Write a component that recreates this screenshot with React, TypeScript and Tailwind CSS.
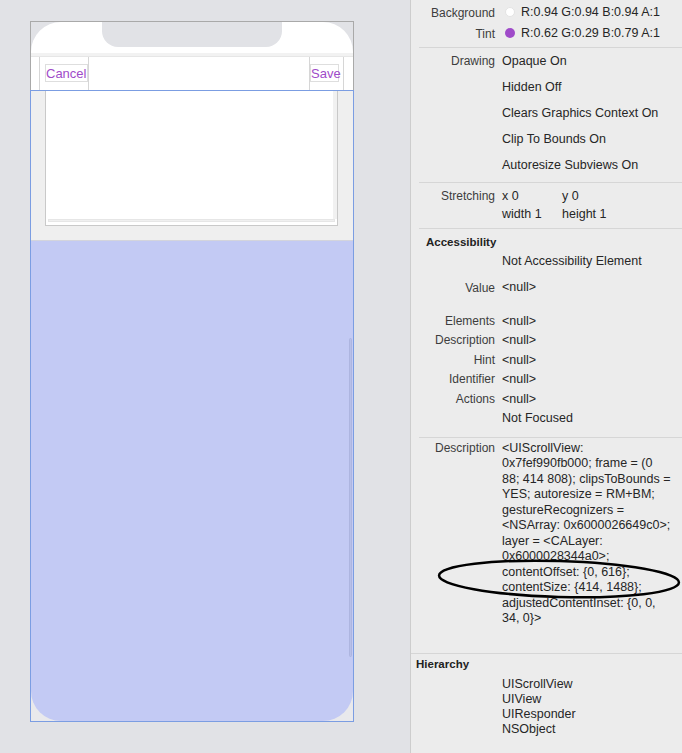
import React from "react";

type RowProps = {
  label?: string;
  children: React.ReactNode;
  className?: string;
};

const Row: React.FC<RowProps> = ({ label, children, className }) => {
  return (
    <div className={"flex items-center " + (className ?? "")}>
      <div className="w-[84px] shrink-0 text-right text-[12px] text-[#3d3d3d]">{label}</div>
      <div className="ml-[7px] text-[#262626] whitespace-nowrap">{children}</div>
    </div>
  );
};

const Divider = () => <div className="ml-[8px] h-px bg-[#d6d6d6]" />;

export default function App() {
  const description = [
    "<UIScrollView:",
    "0x7fef990fb000; frame = (0",
    "88; 414 808); clipsToBounds =",
    "YES; autoresize = RM+BM;",
    "gestureRecognizers =",
    "<NSArray: 0x6000026649c0>;",
    "layer = <CALayer:",
    "0x6000028344a0>;",
    "contentOffset: {0, 616};",
    "contentSize: {414, 1488};",
    "adjustedContentInset: {0, 0,",
    "34, 0}>",
  ];
  const hierarchy = ["UIScrollView", "UIView", "UIResponder", "NSObject"];

  return (
    <div className="flex w-[682px] h-[753px] overflow-hidden font-['Liberation_Sans',Arial,sans-serif]">
      {/* canvas */}
      <div className="w-[410px] shrink-0 bg-[#e1e2e6] pl-[30px] pt-[21px]">
        <div className="w-[324px]">
          <div className="h-[69px] border-x border-t border-[#a9a9a9] flex flex-col">
            <div className="h-[31px] bg-white rounded-t-[30px] flex justify-center">
              <div className="w-[180px] h-[25px] bg-[#e1e2e6] rounded-b-[16px]" />
            </div>
            <div className="h-[4px] bg-[#f2f2f2] border-b border-[#e6e6e6]" />
            <div className="flex-1 bg-white flex justify-between pl-[8px] pr-[9px]">
              <div className="w-[50px] h-full border-x border-[#d6d6d6] pl-[5px] pt-[7px]">
                <div className="h-[18px] w-[43px] border border-[#dedede] flex items-center text-[13px] text-[#9f4bc9] leading-none">
                  Cancel
                </div>
              </div>
              <div className="w-[35px] h-full border-x border-[#d6d6d6] pt-[7px]">
                <div className="h-[18px] w-[29px] border border-[#dedede] flex items-center text-[13px] text-[#9f4bc9] leading-none">
                  Save
                </div>
              </div>
            </div>
          </div>
          <div className="relative h-[632px] border border-[#7b9de2] border-l-[1.5px] flex flex-col bg-[#e9e9ec]">
            <div className="h-[150px] bg-[#efefef] pl-[14px] border-b border-[#d3d4dc]">
              <div className="w-[293px] h-[135px] bg-white border-x border-b border-[#c9c9c9] flex flex-col">
                <div className="flex-1 flex justify-end">
                  <div className="w-[4px] bg-[#f1f1f1]" />
                </div>
                <div className="h-[3px] mx-[2px] mb-[3px] bg-[#f0f0f0] border border-[#e6e6e6]" />
              </div>
            </div>
            <div className="flex-1 bg-[#c3caf4] rounded-b-[30px]" />
            <div className="absolute right-[1.5px] top-[247px] h-[319px] w-[3px] rounded-full bg-[#b7bfe9] border border-[#adb5e0]" />
          </div>
        </div>
      </div>

      {/* inspector */}
      <div className="relative flex-1 bg-[#ececec] border-l border-[#cdcdcd] text-[12.5px] leading-none">
        <div className="pt-[2px]">
          <Row label="Background" className="h-[21px]">
            <span className="inline-flex items-center">
              <span className="inline-block w-[10px] h-[10px] rounded-full bg-white border border-[#e4e4e4] ml-[3px] mr-[6px]" />
              R:0.94 G:0.94 B:0.94 A:1
            </span>
          </Row>
          <Row label="Tint" className="h-[21px]">
            <span className="inline-flex items-center">
              <span className="inline-block w-[10px] h-[10px] rounded-full bg-[#9f4bc9] ml-[3px] mr-[6px]" />
              R:0.62 G:0.29 B:0.79 A:1
            </span>
          </Row>
        </div>
        <div className="mt-[3px]">
          <Divider />
        </div>
        <Row label="Drawing" className="h-[26px]">Opaque On</Row>
        <Row className="h-[26px]">Hidden Off</Row>
        <Row className="h-[26px]">Clears Graphics Context On</Row>
        <Row className="h-[26px]">Clip To Bounds On</Row>
        <Row className="h-[26px]">Autoresize Subviews On</Row>
        <div className="mt-[4px]">
          <Divider />
        </div>
        <div className="pt-[4px]">
          <Row label="Stretching" className="h-[18px]">
            <span className="inline-block w-[60px]">x 0</span>y 0
          </Row>
          <Row className="h-[18px]">
            <span className="inline-block w-[60px]">width 1</span>height 1
          </Row>
        </div>
        <div className="mt-[5px]">
          <Divider />
        </div>
        <div className="pt-[5px] pl-[15px] h-[23px] flex items-center font-bold text-[11.5px] text-[#222]">
          Accessibility
        </div>
        <Row className="h-[19px]">Not Accessibility Element</Row>
        <Row label="Value" className="h-[19px] mt-[7px]">&lt;null&gt;</Row>
        <Row label="Elements" className="h-[19.5px] mt-[14px]">&lt;null&gt;</Row>
        <Row label="Description" className="h-[19.5px]">&lt;null&gt;</Row>
        <Row label="Hint" className="h-[19.5px]">&lt;null&gt;</Row>
        <Row label="Identifier" className="h-[19.5px]">&lt;null&gt;</Row>
        <Row label="Actions" className="h-[19.5px]">&lt;null&gt;</Row>
        <Row className="h-[19.5px]">Not Focused</Row>
        <div className="mt-[8.5px]">
          <Divider />
        </div>
        <div className="flex pt-[3px] leading-[15.5px]">
          <div className="w-[84px] shrink-0 text-right text-[12px] text-[#3d3d3d]">Description</div>
          <div className="ml-[7px] text-[#262626]">
            {description.map((line) => (
              <div key={line} className="whitespace-nowrap h-[15.5px]">
                {line}
              </div>
            ))}
          </div>
        </div>
        <div className="mt-[26px] h-px bg-[#d6d6d6]" />
        <div className="pl-[5px] h-[22px] flex items-center font-bold text-[11.5px] text-[#222]">Hierarchy</div>
        <div className="pl-[91px] pt-[1px] leading-[15px] text-[#262626]">
          {hierarchy.map((item) => (
            <div key={item} className="h-[15px]">
              {item}
            </div>
          ))}
        </div>

        {/* hand-drawn ellipse */}
        <svg
          className="absolute left-[25px] top-[556px]"
          width="246"
          height="46"
          viewBox="0 0 246 46"
        >
          <ellipse
            cx="123"
            cy="23"
            rx="120"
            ry="18"
            fill="none"
            stroke="#000"
            strokeWidth="2.5"
            transform="rotate(1.7 123 23)"
          />
        </svg>
      </div>
    </div>
  );
}
